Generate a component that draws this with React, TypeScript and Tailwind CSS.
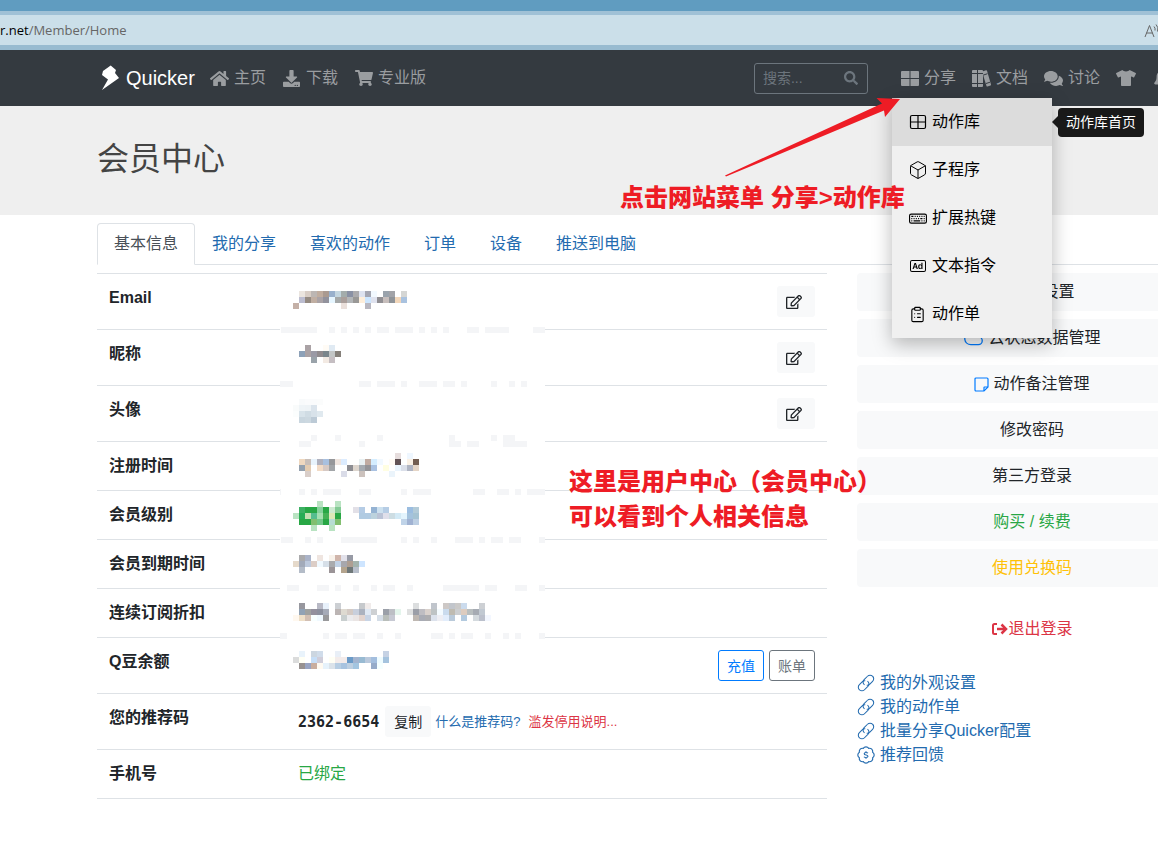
import { type ReactNode } from 'react';
import { FaBell, FaComments, FaDownload, FaHome, FaRegEdit, FaSearch, FaShoppingCart, FaTshirt } from 'react-icons/fa';
import { BsBadgeAd, BsKeyboard } from 'react-icons/bs';
import { Box, ClipboardList, Cloud, Settings } from 'lucide-react';

// [row, first column, colours]; "-" leaves a cell empty
type Run = [number, number, string];

const runs: Run[] = [
  [0, 3, 'ebe5df d8cdc5 bcb6b3 c0ad9f aa9a90 98b0cc c3d6e0 a3acab 8a91a4 acabad dde2ef a4a6b2 f2f9ff - 9aa3ac a2a3a8 - d5d6d4'],
  [1, 3, 'bcbdd0 958b82 c0aea2 aaa3a6 92929c e6f6ff a5a9a9 aa9f9b b3b6b8 999896 fdeedb cce6ff dfe2ee 918f93 c7bebc 8f9398 f2d7bb a9c2df'],
  [2, 2, 'c4b0a7 - - - - - - - eae0db - - - b8b7c0'],
  [9, 4, 'aaa2a5 - - fffbf5 e0eaf3'],
  [10, 3, '8da1b8 aaa2a5 9a99a5 918b8e 7b868c c2c5c5 85807a'],
  [11, 5, '9aa3aa - f3eae3 c5bec2'],
  [18, 3, 'f8fafb fafbfc fafbfc fbfcfc'],
  [19, 2, 'f9fbfb eff4f7 eef3f6 dbe4ec'],
  [20, 2, 'fbfdfd d8e3ea d0dce4 d8e2ea e0e9ef'],
  [21, 3, 'c9d6df ccd8e0 bccad6'],
  [27, 19, 'e6dddd - eff7ff'],
  [28, 3, 'efd8bf c9bfb9 e8f3fc b0b1be a8c0df 96979a efe5df dcecff - - e8f0f2 c0aba1 d4edff f2f9ff - fffbf5 625356 - fbf1e5 735d50'],
  [29, 3, '93a0ae e4ccb1 - f2dbc6 d6c9c4 a2a5a8 - - 8d8d92 ddd5cd a5abb1 949497 aac2e2 - fffee2 - eaf4fd dbdfe9 b0b5c3 e5d5c6'],
  [30, 4, 'd9cec9 - - - - - dadce8 - - ccc2bd - - - - ebf4fb'],
  [35, 6, 'b9e3c2 - - b9e3c2'],
  [36, 3, '3cb063 28a745 28a745 86d19b 28a745 cfead2 84cb95 - - e2e0e7 b5cce5 - 95b3d3 cde1ef b6cde5 - - - 9bbde0 b3cbd8'],
  [37, 2, 'b9e3c2 28ac55 c5dfb2 55bd8e a5e0b0 45b156 dce8b8 28a745 - - - b1cbe2 b1cbe2 bcd2dd bac3d6 dfdfea cddde3 d3eaf6 e3f4fd a3c2dd a5c3d3'],
  [38, 3, '28a745 28a745 81bf6f 74c88a 28a745 b7ddd4 82bf70 - - - - - - - - - - bfd3e8 a0b2d2 bdcfe3'],
  [39, 5, 'b9e3c2 - - b9e3c2'],
  [44, 3, 'aaaaac aab3c8 - efe5e0 - f8f2eb d0b5ab e2e1ea 979aa5'],
  [45, 2, 'e5d9ca a2aab9 bdc9dc dccdc6 f0f9ff d6dfe8 a9aaad c1d1e5 a7a7ad ae9e92 a3b3ad cee5ff'],
  [46, 3, 'b4bcc8 - - - - 9b9497 - b4a48e 6f7879 b8bfcb'],
  [52, 3, '97979e - - b8b9c5 e8f1fb - cccfd3 - - - c6c9cc f0ebea - - - - - - - dcdedf - - c0c5cc - cdc8c6 c2c6cc cbcac9 cbdbed - - cdd0d4'],
  [53, 3, '91a2b5 9fa1a0 93909d 8c909e a6abb8 - bcb5b4 dedad1 d4cac4 c8cfdc abb2bf e0e9f4 cdd0d3 - 9ba0a9 bdbfc5 e4f5ec - dfe0e0 9c9fa8 bebdc2 d9d1cc bec3c4 f4fbff cadbed bfbbb1 ccced0 ddccbf b8bebf a6abb3 c1c9d2'],
  [54, 2, 'fff8ef eedfc8 d2bfb3 f8ffff f0f9ff 99999b - - c9cfcf ebebed eae5e4 e2d4cf c8d4e5 - d4dde7 b9beba c7c9d3 - - - bfb8b2 a9acb5 adadb0 dce2ec eeeef3 e2edfb bacada - b3cadf - d4dade bbc0cc f3f7ff'],
  [60, 3, 'e9f3fb - ccd6e0 d0dcea - - e9eff7 - - - - - - - c6d2e4'],
  [61, 2, 'dbdcdc fffff5 - c6def7 cfcdd9 - fffff5 f3eceb f3ebea 6b9bc8 a3b4cf 98bad2 bac9dc a3bede effcff a5c3de'],
  [62, 3, '97918f 98a4c2 c9ae9f fffaf1 e6f2fb dbe3ea b7cee3 a8c3df bdcfe1 a3c5e0 - - 96abc9 f5ffff'],
];

// faded pieces of the row separators: [row, [first column, cell count][]]
const dashes: [number, [number, number][]][] = [
  [6, [[0, 6], [8, 1], [10, 1], [12, 1], [14, 1], [16, 2], [19, 3], [23, 1], [25, 1], [27, 1], [31, 2], [34, 4], [42, 2]]],
  [15, [[-1, 3], [13, 2], [16, 3], [20, 1], [23, 3], [27, 2], [30, 1], [35, 1], [38, 1], [40, 1]]],
  [24, [[5, 1], [9, 1], [16, 1], [28, 1], [35, 1], [37, 2]]],
  [25, [[3, 2], [13, 1], [28, 2], [31, 2], [37, 4]]],
  [33, [[-1, 1], [3, 1], [5, 1], [7, 3], [13, 2], [20, 1], [22, 3], [32, 2], [36, 2], [39, 1], [41, 3]]],
  [41, [[0, 2], [4, 1], [6, 1], [10, 6], [20, 1], [22, 1], [25, 1], [29, 3], [33, 1], [35, 2], [38, 2], [43, 1]]],
  [49, [[1, 2], [6, 2], [9, 1], [12, 1], [15, 1], [17, 2], [21, 1], [27, 6], [34, 2], [39, 2], [43, 1]]],
  [57, [[-1, 2], [7, 1], [9, 2], [12, 2], [16, 1], [19, 1], [25, 2], [28, 1], [30, 2], [34, 1], [37, 1], [39, 1], [43, 1]]],
];

function Mosaic() {
  return (
    <svg className="absolute left-[183px] top-[18px]" width="265" height="378" viewBox="-1 0 265 378" shapeRendering="crispEdges" aria-hidden="true">
      <rect x="-1" width="265" height="378" fill="#fff" />
      {dashes.map(([row, parts]) =>
        parts.map(([col, n]) => <rect key={`${row}-${col}`} x={col * 6} y={row * 6} width={n * 6} height="6" fill="#f4f5f7" />),
      )}
      {runs.map(([row, start, colors]) =>
        colors.split(' ').map((c, i) =>
          c === '-' ? null : <rect key={`${row}-${i}`} x={(start + i) * 6} y={row * 6} width="6" height="6" fill={`#${c}`} />,
        ),
      )}
    </svg>
  );
}

function NavItem({ icon, children }: { icon: ReactNode; children?: ReactNode }) {
  return (
    <a href="#" className="flex items-center gap-1 px-2 py-2 text-[#9a9da0]">
      <span className="flex w-5 shrink-0 justify-center">{icon}</span>
      {children}
    </a>
  );
}

function GridIcon() {
  return (
    <svg width="18" height="15" viewBox="0 0 18 15" fill="currentColor">
      <path d="M1 0h7.5v7H0V1a1 1 0 0 1 1-1ZM9.5 0H17a1 1 0 0 1 1 1v6H9.5ZM0 8h8.500v7H1a1 1 0 0 1-1-1ZM9.500 8H18v6a1 1 0 0 1-1 1H9.500Z" />
    </svg>
  );
}

function BooksIcon() {
  return (
    <svg width="19" height="17" viewBox="0 0 19 17" fill="currentColor">
      <path fillRule="evenodd" d="M1 0h4v17H1a1 1 0 0 1-1-1V1a1 1 0 0 1 1-1ZM0 3v1h5V3ZM0 13v1h5v-1ZM6 0h4a1 1 0 0 1 1 1v15a1 1 0 0 1-1 1H6ZM6 3v1h5V3ZM6 13v1h5v-1Z" />
      <path d="m10.500 1.500 3.500-1.200a.8.8 0 0 1 1 .5L19 14.500a.8.8 0 0 1-.5 1l-3 1a.8.8 0 0 1-1-.5L12 8Z" />
      <path d="m11.500 5 4-1.300M14 13.500l4-1.300" stroke="#343a40" />
    </svg>
  );
}

function GridOutlineIcon() {
  return (
    <svg width="18" height="16" viewBox="0 0 18 16" fill="none" stroke="currentColor" strokeWidth="1.2">
      <rect x="1.500" y="1.500" width="15" height="13" rx="1.500" />
      <path d="M9 1.500v13M1.500 8h15" />
    </svg>
  );
}

function StickyIcon() {
  return (
    <svg width="15" height="15" viewBox="0 0 15 15" fill="none" stroke="#007bff" strokeWidth="1.200">
      <path d="M2 1h11a1 1 0 0 1 1 1v8l-4 4H2a1 1 0 0 1-1-1V2a1 1 0 0 1 1-1Z" />
      <path d="M14 10h-3.500a.5.5 0 0 0-.5.5V14" />
    </svg>
  );
}

function SignOutIcon() {
  return (
    <svg width="17" height="14" viewBox="0 0 17 14" fill="none" stroke="currentColor" strokeWidth="2">
      <path d="M6 2H3.500A1.500 1.500 0 0 0 2 3.500v7A1.500 1.500 0 0 0 3.500 12H6" />
      <path d="M6 7h9" strokeWidth="2.500" />
      <path d="M10.500 2.500 15 7l-4.500 4.500" strokeWidth="2.500" />
    </svg>
  );
}

function LinkIcon() {
  return (
    <svg width="18" height="18" viewBox="0 0 24 24" fill="none" stroke="currentColor" strokeWidth="1.400">
      <path d="M10 14.500a5 5 0 0 1-.5-7L14 3a4.700 4.700 0 0 1 6.800 0 4.700 4.700 0 0 1 0 6.800l-4 4a4.700 4.700 0 0 1-3.800 1.200" />
      <path d="M14 9.500a5 5 0 0 1 .5 7L10 21a4.700 4.700 0 0 1-6.800 0 4.700 4.700 0 0 1 0-6.800l4-4A4.700 4.700 0 0 1 11 9" />
    </svg>
  );
}

function BadgeIcon() {
  return (
    <svg width="18" height="18" viewBox="1 1 22 22" fill="none" stroke="currentColor" strokeWidth="1.400">
      <path d="M3.850 8.620a4 4 0 0 1 4.780-4.770 4 4 0 0 1 6.740 0 4 4 0 0 1 4.780 4.780 4 4 0 0 1 0 6.740 4 4 0 0 1-4.770 4.780 4 4 0 0 1-6.750 0 4 4 0 0 1-4.780-4.770 4 4 0 0 1 0-6.760Z" />
      <path d="M14.300 9.800c-.5-.7-1.300-.9-2.300-.9-1.300 0-2.200.6-2.200 1.500 0 2.200 4.600 1 4.600 3.200 0 1-1 1.500-2.400 1.500-1.100 0-2-.3-2.500-1M12 7.500v1.400M12 15.100v1.400" />
    </svg>
  );
}

const menu = [
  { icon: <GridOutlineIcon />, text: '动作库' },
  { icon: <Box size={20} strokeWidth={1.2} className="shrink-0" />, text: '子程序' },
  { icon: <BsKeyboard size={18} />, text: '扩展热键' },
  { icon: <BsBadgeAd size={16} />, text: '文本指令' },
  { icon: <ClipboardList size={17} strokeWidth={1.6} />, text: '动作单' },
];

function ShareMenu() {
  return (
    <ul className="absolute top-full left-0 z-20 w-40 bg-[#f0f0f0] text-black shadow-[0_6px_18px_rgba(0,0,0,0.28)]">
      {menu.map((item, i) => (
        <li key={item.text} className={i === 0 ? 'relative bg-[#dcdcdc]' : ''}>
          <a href="#" className="flex h-12 items-center gap-1 px-4">
            <span className="flex w-5 justify-center">{item.icon}</span>
            {item.text}
          </a>
          {i === 0 && (
            <div role="tooltip" className="absolute top-[10px] left-[166px] rounded bg-[#191919] px-2 py-1 text-sm leading-[21px] whitespace-nowrap text-white">
              <span className="absolute top-2 -left-[6px] border-y-[6px] border-r-[6px] border-y-transparent border-r-[#191919]" />
              动作库首页
            </div>
          )}
        </li>
      ))}
    </ul>
  );
}

function EditButton({ label }: { label: string }) {
  return (
    <button aria-label={label} className="inline-flex h-[31px] w-[38px] items-center justify-center rounded-[3px] bg-[#f8f9fa] pr-1">
      <FaRegEdit size={16} />
    </button>
  );
}

const smallBtn = 'h-[31px] rounded-[3px] border px-2 text-sm';

const rows: { label: string; value?: ReactNode; action?: ReactNode }[] = [
  { label: 'Email', action: <EditButton label="修改Email" /> },
  { label: '昵称', action: <EditButton label="修改昵称" /> },
  { label: '头像', action: <EditButton label="修改头像" /> },
  { label: '注册时间' },
  { label: '会员级别' },
  { label: '会员到期时间' },
  { label: '连续订阅折扣' },
  {
    label: 'Q豆余额',
    action: (
      <div className="flex justify-end gap-[5px]">
        <button className={`${smallBtn} border-[#007bff] text-[#007bff]`}>充值</button>
        <button className={`${smallBtn} border-[#6c757d] text-[#6c757d]`}>账单</button>
      </div>
    ),
  },
  {
    label: '您的推荐码',
    value: (
      <div className="flex items-center text-[13px]">
        <strong className="font-['DejaVu_Sans_Mono',monospace] text-[15px]">2362-6654</strong>
        <button className={`${smallBtn} ml-[6px] border-[#f8f9fa] bg-[#f8f9fa]`}>复制</button>
        <a href="#" className="ml-1 text-[#236baf]">什么是推荐码?</a>
        <a href="#" className="ml-2 text-[#dc3545]">滥发停用说明...</a>
      </div>
    ),
  },
  { label: '手机号', value: <span className="text-[#28a745]">已绑定</span> },
];

const tabs = ['基本信息', '我的分享', '喜欢的动作', '订单', '设备', '推送到电脑'];

const sideBtn = 'flex h-[38px] items-center justify-center gap-1 rounded bg-[#f8f9fa]';

const links = [
  { icon: <LinkIcon />, text: '我的外观设置' },
  { icon: <LinkIcon />, text: '我的动作单' },
  { icon: <LinkIcon />, text: '批量分享Quicker配置' },
  { icon: <BadgeIcon />, text: '推荐回馈' },
];

export default function App() {
  return (
    <div className="relative min-h-screen overflow-hidden bg-white font-['Liberation_Sans','Noto_Sans_CJK_SC',sans-serif] text-base text-[#212529]">
      {/* Browser address bar */}
      <div className="h-[11px] bg-[#609cc0]" />
      <div className="flex h-[39px] items-stretch border-t-4 border-b-[5px] border-t-[#a0c1d6] border-b-[#98bbd0] bg-[#cbdfe9]">
        <div className="flex flex-1 items-center justify-between overflow-hidden pt-px font-['Open_Sans',sans-serif] text-[13px] text-[#666]">
          <span>
            <span className="text-black">r.net</span>/Member/Home
          </span>
          <svg className="-mr-1" width="18" height="16" viewBox="0 0 18 16" fill="none" stroke="currentColor">
            <path d="M1 14 5.500 2.500 10 14M2.500 10h6M10 3.500q1.500 1.500 1 4M12 1.500q3 3 1.500 7" />
          </svg>
        </div>
      </div>

      {/* Navbar */}
      <nav className="h-14 bg-[#343a40]">
        <div className="ml-[97px] flex h-14 w-[1110px] items-center">
          <a href="#" className="mr-[7px] flex items-center gap-[5px] text-xl text-white">
            <svg width="24" height="26" viewBox="0 0 24 26" fill="currentColor">
              <path d="M13.700.5 19 5l-1 3 4 5L5 25l6-10.500L5 10l1-4Z" />
            </svg>
            Quicker
          </a>
          <NavItem icon={<FaHome size={19} />}>主页</NavItem>
          <NavItem icon={<FaDownload size={17} />}>下载</NavItem>
          <NavItem icon={<FaShoppingCart size={18} />}>专业版</NavItem>
          <div className="ml-auto flex items-center">
            <form className="mr-6 flex h-[31px] w-[114px] items-center rounded-[3px] border border-[#6c757d] pr-[9px] pl-2 text-[#6c757d]">
              <input aria-label="搜索" placeholder="搜索..." className="w-0 flex-1 bg-transparent text-sm outline-none placeholder:text-[#6c757d]" />
              <button type="button" aria-label="搜索">
                <FaSearch size={14} />
              </button>
            </form>
            <div className="relative">
              <NavItem icon={<GridIcon />}>分享</NavItem>
              <ShareMenu />
            </div>
            <NavItem icon={<BooksIcon />}>文档</NavItem>
            <NavItem icon={<FaComments size={19} />}>讨论</NavItem>
            <NavItem icon={<FaTshirt size={20} />} />
            <NavItem icon={<FaBell size={19} />} />
            <div className="w-[27px]" />
          </div>
        </div>
      </nav>

      <header className="bg-[#efefef] pt-[33px] pb-9">
        <h1 className="ml-[97px] text-[32px] leading-10 text-[#444]">会员中心</h1>
      </header>

      <main className="ml-[97px] w-[1110px] pt-2">
        <div role="tablist" className="flex border-b border-[#dee2e6]">
          {tabs.map((tab, i) => (
            <button
              key={tab}
              role="tab"
              aria-selected={i === 0}
              className={`-mb-px rounded-t border px-4 pt-2 pb-2 leading-6 ${
                i === 0 ? 'border-[#dee2e6] border-b-white bg-white text-[#495057]' : 'border-transparent text-[#236baf]'
              }`}
            >
              {tab}
            </button>
          ))}
        </div>

        <div className="mt-2 flex items-start gap-[30px]">
          <div className="relative w-[730px]">
            <table className="w-full table-fixed border-b border-[#dee2e6]">
              <tbody>
                {rows.map((row) => (
                  <tr key={row.label} className="border-t border-[#dee2e6] align-top">
                    <th scope="row" className="w-[189px] p-3 pr-0 text-left leading-6 font-bold">
                      {row.label}
                    </th>
                    <td className="p-3 leading-6" colSpan={row.action ? 1 : 2}>
                      {row.value}
                    </td>
                    {row.action && <td className="w-[140px] p-3 text-right leading-[0px]">{row.action}</td>}
                  </tr>
                ))}
              </tbody>
            </table>
            <Mosaic />
          </div>

          <aside className="flex flex-1 flex-col gap-2">
            <a href="#" className={sideBtn}>
              <Settings size={17} className="text-[#007bff]" />
              偏好设置
            </a>
            <a href="#" className={sideBtn}>
              <Cloud size={21} strokeWidth={1.5} className="text-[#007bff]" />
              云状态数据管理
            </a>
            <a href="#" className={sideBtn}>
              <StickyIcon />
              动作备注管理
            </a>
            <a href="#" className={sideBtn}>修改密码</a>
            <a href="#" className={sideBtn}>第三方登录</a>
            <a href="#" className={`${sideBtn} text-[#28a745]`}>购买 / 续费</a>
            <a href="#" className={`${sideBtn} text-[#ffc107]`}>使用兑换码</a>
            <a href="#" className="mt-[15px] flex h-[38px] items-center justify-center text-[#dc3545]">
              <SignOutIcon />
              退出登录
            </a>
            <ul className="mt-[15px] text-[#236baf]">
              {links.map((link) => (
                <li key={link.text}>
                  <a href="#" className="flex h-6 items-center gap-[5px]">
                    {link.icon}
                    {link.text}
                  </a>
                </li>
              ))}
            </ul>
          </aside>
        </div>
      </main>

      {/* Red notes over the page */}
      <svg className="absolute top-[96px] left-[724px] z-30" width="178" height="82" viewBox="724 96 178 82" aria-hidden="true">
        <path d="M725 175.500 882 103.500 876.500 98 900 99 885 117 884 110.500 726 176.500Z" fill="#ee1c25" />
      </svg>
      <p className="absolute top-[180px] left-[620px] z-30 text-2xl leading-[35px] font-black whitespace-nowrap text-[#ee1c25]">
        点击网站菜单 分享&gt;动作库
      </p>
      <p className="absolute top-[464px] left-[569px] z-30 text-2xl leading-[35px] font-black whitespace-nowrap text-[#ee1c25]">
        这里是用户中心（会员中心）
        <br />
        可以看到个人相关信息
      </p>
    </div>
  );
}
